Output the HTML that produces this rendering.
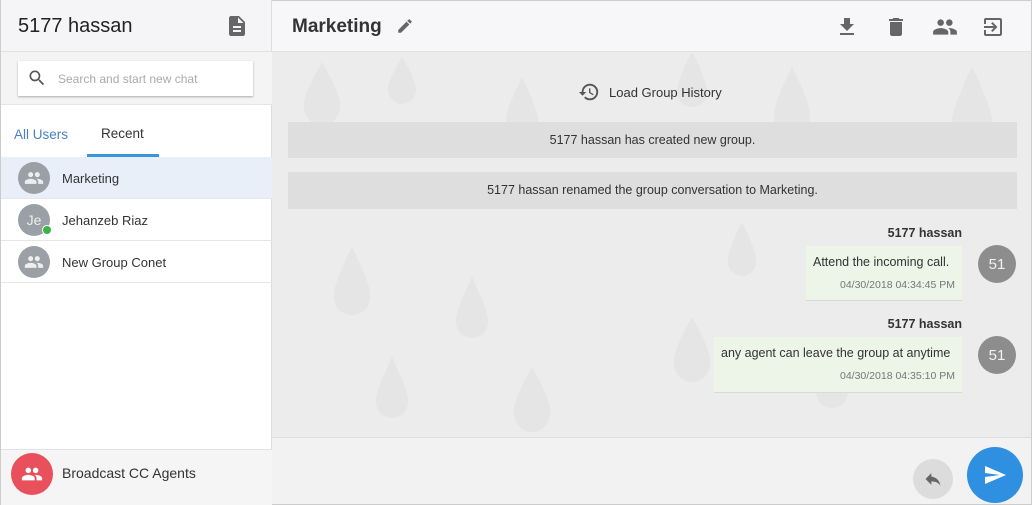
<!DOCTYPE html>
<html><head><meta charset="utf-8"><style>
*{box-sizing:border-box;margin:0;padding:0}
body{width:1032px;height:505px;overflow:hidden;font-family:"Liberation Sans",sans-serif;background:#fff;position:relative;color:#333}
.abs{position:absolute}
.left{left:0;top:0;width:272px;height:505px;border-right:1px solid #ddd;border-left:1px solid #ccc;background:#fff}
.hdr{height:52px;background:#f5f5f7;border-bottom:1px solid #e2e2e2}
.av{position:absolute;width:32px;height:32px;border-radius:50%;background:#9aa0a6;display:flex;align-items:center;justify-content:center;color:#eee;font-size:14px}
.row{position:absolute;left:0;width:271px;height:42px;border-bottom:1px solid #e6e6e6}
.row span{position:absolute;left:61px;top:14px;font-size:13px;color:#333}
.sys{position:absolute;left:288px;width:729px;background:#dedede;text-align:center;font-size:12.5px;color:#333}
.bub{position:absolute;background:#edf4e8;border-bottom:1px solid #d8ddd4;font-size:12.5px;color:#333}
.ts{font-size:10.5px;color:#777;text-align:right}
.name{position:absolute;font-size:12.5px;font-weight:bold;color:#333}
.g{background:#8d8d8d;width:38px;height:38px;border-radius:50%;position:absolute;color:#f2f2f2;font-size:15px;display:flex;align-items:center;justify-content:center}
</style></head><body>
<div class="abs left">
 <div class="hdr"><div class="abs" style="left:17px;top:15px;font-size:20px;color:#222">5177 hassan</div>
 <svg class="abs" style="left:224px;top:14px" width="24" height="24" viewBox="0 0 24 24"><path fill="#666" d="M14 2H6c-1.1 0-2 .9-2 2v16c0 1.1.9 2 2 2h12c1.1 0 2-.9 2-2V8l-6-6zm2 16H8v-2h8v2zm0-4H8v-2h8v2zm-3-5V3.5L18.5 9H13z"/></svg></div>
 <div class="abs" style="left:0;top:52px;width:271px;height:53px;background:#f4f4f4;border-bottom:1px solid #e6e6e6"></div>
 <div class="abs" style="left:17px;top:61px;width:235px;height:35px;background:#fff;box-shadow:0 1px 2px rgba(0,0,0,.3)">
  <svg class="abs" style="left:9px;top:7px" width="20" height="20" viewBox="0 0 24 24"><path fill="#555" d="M15.5 14h-.79l-.28-.27A6.47 6.47 0 0016 9.5 6.5 6.5 0 109.5 16c1.61 0 3.09-.59 4.23-1.57l.27.28v.79l5 4.99L20.49 19l-4.99-5zm-6 0C7.01 14 5 11.990 5 9.5S7.01 5 9.5 5 14 7.01 14 9.5 11.99 14 9.5 14z"/></svg>
  <div class="abs" style="left:40px;top:11px;font-size:12px;color:#aaa">Search and start new chat</div></div>
 <div class="abs" style="left:13px;top:127px;font-size:13.5px;color:#4a80c8">All Users</div>
 <div class="abs" style="left:100px;top:126px;font-size:13.5px;color:#333">Recent</div>
 <div class="abs" style="left:86px;top:154px;width:72px;height:3px;background:#3b95d9"></div>
 <div class="row" style="top:157px;background:#e8eff9"><div class="av" style="left:17px;top:5px"><svg width="20" height="20" viewBox="0 0 24 24"><path fill="#eee" d="M16 11c1.66 0 2.99-1.34 2.99-3S17.66 5 16 5c-1.66 0-3 1.34-3 3s1.34 3 3 3zm-8 0c1.66 0 2.99-1.34 2.99-3S9.66 5 8 5C6.34 5 5 6.34 5 8s1.34 3 3 3zm0 2c-2.33 0-7 1.17-7 3.5V19h14v-2.5c0-2.330-4.67-3.5-7-3.5zm8 0c-.29 0-.62.02-.97.05 1.16.84 1.97 1.97 1.97 3.45V19h6v-2.5c0-2.33-4.67-3.5-7-3.5z"/></svg></div><span>Marketing</span></div>
 <div class="row" style="top:199px"><div class="av" style="left:17px;top:5px">Je</div><div class="abs" style="left:41px;top:26px;width:10px;height:10px;border-radius:50%;background:#3cb44b;border:1px solid #fff"></div><span>Jehanzeb Riaz</span></div>
 <div class="row" style="top:241px"><div class="av" style="left:17px;top:5px"><svg width="20" height="20" viewBox="0 0 24 24"><path fill="#eee" d="M16 11c1.66 0 2.99-1.34 2.99-3S17.66 5 16 5c-1.66 0-3 1.34-3 3s1.34 3 3 3zm-8 0c1.66 0 2.99-1.34 2.99-3S9.66 5 8 5C6.34 5 5 6.34 5 8s1.34 3 3 3zm0 2c-2.33 0-7 1.17-7 3.5V19h14v-2.5c0-2.33-4.67-3.5-7-3.5zm8 0c-.29 0-.62.02-.97.05 1.16.84 1.97 1.97 1.97 3.45V19h6v-2.5c0-2.33-4.67-3.5-7-3.5z"/></svg></div><span>New Group Conet</span></div>
 <div class="abs" style="left:0;top:449px;width:271px;height:56px;background:#f5f5f5;border-top:1px solid #e2e2e2">
  <div class="abs" style="left:10px;top:3px;width:42px;height:42px;border-radius:50%;background:#e8505b;display:flex;align-items:center;justify-content:center"><svg width="22" height="22" viewBox="0 0 24 24"><path fill="#fff" d="M16 11c1.66 0 2.99-1.34 2.99-3S17.66 5 16 5c-1.66 0-3 1.34-3 3s1.34 3 3 3zm-8 0c1.66 0 2.99-1.34 2.99-3S9.66 5 8 5C6.34 5 5 6.34 5 8s1.34 3 3 3zm0 2c-2.33 0-7 1.17-7 3.5V19h14v-2.5c0-2.33-4.67-3.5-7-3.5zm8 0c-.29 0-.62.02-.97.05 1.16.84 1.97 1.97 1.97 3.45V19h6v-2.5c0-2.33-4.67-3.5-7-3.5z"/></svg></div>
  <div class="abs" style="left:61px;top:15px;font-size:14px;color:#333">Broadcast CC Agents</div></div>
</div>
<div class="abs" style="left:272px;top:0;width:760px;height:52px;background:#f7f7f9;border-bottom:1px solid #e2e2e2;border-top:1px solid #ccc;border-right:1px solid #ccc">
 <div class="abs" style="left:20px;top:15px;font-size:19px;font-weight:bold;color:#333">Marketing</div>
 <svg class="abs" style="left:124px;top:16px" width="18" height="18" viewBox="0 0 24 24"><path fill="#666" d="M3 17.25V21h3.75L17.81 9.94l-3.75-3.75L3 17.25zM20.71 7.04a1 1 0 000-1.41l-2.34-2.34a1 1 0 00-1.41 0l-1.83 1.83 3.75 3.75 1.83-1.83z"/></svg>
 <svg class="abs" style="left:563px;top:14px" width="24" height="24" viewBox="0 0 24 24"><path fill="#666" d="M19 9h-4V3H9v6H5l7 7 7-7zM5 18v2h14v-2H5z"/></svg>
 <svg class="abs" style="left:612px;top:14px" width="24" height="24" viewBox="0 0 24 24"><path fill="#666" d="M6 19c0 1.1.9 2 2 2h8c1.1 0 2-.9 2-2V7H6v12zM19 4h-3.5l-1-1h-5l-1 1H5v2h14V4z"/></svg>
 <svg class="abs" style="left:659px;top:13px" width="28" height="26" viewBox="0 0 24 24"><path fill="#666" d="M16 11c1.66 0 2.99-1.34 2.99-3S17.66 5 16 5c-1.66 0-3 1.34-3 3s1.34 3 3 3zm-8 0c1.66 0 2.99-1.34 2.99-3S9.66 5 8 5C6.34 5 5 6.34 5 8s1.34 3 3 3zm0 2c-2.33 0-7 1.17-7 3.5V19h14v-2.5c0-2.33-4.67-3.5-7-3.5zm8 0c-.29 0-.62.02-.97.05 1.16.84 1.97 1.97 1.97 3.45V19h6v-2.5c0-2.33-4.67-3.5-7-3.5z"/></svg>
 <svg class="abs" style="left:709px;top:14px" width="24" height="24" viewBox="0 0 24 24"><path fill="#666" d="M10.09 15.59L11.5 17l5-5-5-5-1.41 1.41L12.67 11H3v2h9.67l-2.58 2.59zM19 3H5a2 2 0 00-2 2v4h2V5h14v14H5v-4H3v4a2 2 0 002 2h14c1.1 0 2-.9 2-2V5c0-1.1-.9-2-2-2z"/></svg>
</div>
<div class="abs" style="left:272px;top:52px;width:760px;height:385px;background:#ececec;border-right:1px solid #ccc;overflow:hidden">
 <svg width="760" height="385" style="position:absolute;left:0;top:0"><g fill="#e5e5e5">
 <path d="M50 10 Q30 45 32 55 A18 18 0 0 0 68 55 Q70 45 50 10Z"/><path d="M130 5 Q115 30 116 38 A14 14 0 0 0 144 38 Q145 30 130 5Z"/><path d="M250 25 Q233 60 234 68 A16 16 0 0 0 266 68 Q267 60 250 25Z"/><path d="M420 0 Q404 30 405 40 A15 15 0 0 0 435 40 Q436 30 420 0Z"/><path d="M520 15 Q500 55 502 65 A18 18 0 0 0 538 65 Q540 55 520 15Z"/><path d="M700 15 Q678 60 680 72 A20 20 0 0 0 720 72 Q722 60 700 15Z"/>
 <path d="M80 195 Q60 235 62 245 A18 18 0 0 0 98 245 Q100 235 80 195Z"/><path d="M200 225 Q183 260 184 270 A16 16 0 0 0 216 270 Q217 260 200 225Z"/><path d="M420 265 Q400 300 402 312 A18 18 0 0 0 438 312 Q440 300 420 265Z"/><path d="M120 305 Q103 340 104 350 A16 16 0 0 0 136 350 Q137 340 120 305Z"/><path d="M260 315 Q240 350 242 362 A18 18 0 0 0 278 362 Q280 350 260 315Z"/><path d="M560 295 Q543 330 544 340 A16 16 0 0 0 576 340 Q577 330 560 295Z"/><path d="M470 170 Q455 200 456 210 A14 14 0 0 0 484 210 Q485 200 470 170Z"/>
 </g></svg>
 <svg class="abs" style="left:306px;top:29px" width="22" height="22" viewBox="0 0 24 24"><path fill="#555" d="M13 3a9 9 0 00-9 9H1l3.89 3.89.07.14L9 12H6c0-3.87 3.13-7 7-7s7 3.13 7 7-3.13 7-7 7c-1.93 0-3.68-.79-4.94-2.06l-1.42 1.42A8.95 8.95 0 0013 21a9 9 0 000-18zm-1 5v5l4.28 2.54.72-1.21-3.5-2.08V8H12z"/></svg>
 <div class="abs" style="left:337px;top:33px;font-size:13px;color:#333">Load Group History</div>
</div>
<div class="sys" style="top:122px;height:36px;line-height:36px">5177 hassan has created new group.</div>
<div class="sys" style="top:172px;height:37px;line-height:37px">5177 hassan renamed the group conversation to Marketing.</div>
<div class="name" style="right:70px;top:226px">5177 hassan</div>
<div class="bub" style="left:806px;top:246px;width:156px;height:55px"><div style="position:absolute;left:7px;top:9px">Attend the incoming call.</div><div class="ts" style="position:absolute;right:7px;top:33px">04/30/2018 04:34:45 PM</div></div>
<div class="g" style="left:978px;top:245px">51</div>
<div class="name" style="right:70px;top:317px">5177 hassan</div>
<div class="bub" style="left:714px;top:337px;width:248px;height:56px"><div style="position:absolute;left:7px;top:9px">any agent can leave the group at anytime</div><div class="ts" style="position:absolute;right:7px;top:33px">04/30/2018 04:35:10 PM</div></div>
<div class="g" style="left:978px;top:336px">51</div>
<div class="abs" style="left:272px;top:437px;width:760px;height:68px;background:#f2f2f2;border-top:1px solid #ddd;border-right:1px solid #ccc;border-bottom:1px solid #ccc">
 <div class="abs" style="left:641px;top:21px;width:40px;height:40px;border-radius:50%;background:#dcdcdc;display:flex;align-items:center;justify-content:center"><svg width="20" height="20" viewBox="0 0 24 24"><path fill="#666" d="M10 9V5l-7 7 7 7v-4.1c5 0 8.5 1.6 11 5.1-1-5-4-10-11-11z"/></svg></div>
 <div class="abs" style="left:695px;top:9px;width:56px;height:56px;border-radius:50%;background:#2f8fe0;display:flex;align-items:center;justify-content:center"><svg width="24" height="24" viewBox="0 0 24 24"><path fill="#fff" d="M2.01 21L23 12 2.01 3 2 10l15 2-15 2z"/></svg></div>
</div>
</body></html>
